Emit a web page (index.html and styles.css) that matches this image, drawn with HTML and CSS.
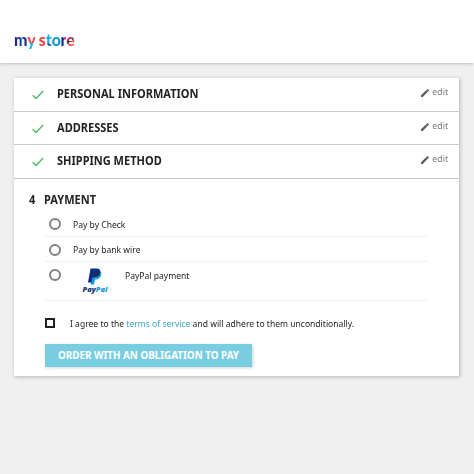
FILE: index.html
```html
<!DOCTYPE html>
<html lang="en">
<head>
<meta charset="utf-8">
<title>my store</title>
<link rel="stylesheet" href="styles.css">
</head>
<body>
<header class="header">
  <div class="logo"><span class="duo-m">m</span><span class="duo-y">y</span> <span class="red">s</span><span class="duo-t">t</span><span class="blue">o</span><span class="duo-r">r</span><span class="duo-e">e</span></div>
</header>
<main class="checkout">
  <section class="step">
    <svg class="check" viewBox="0 0 12 10"><path d="M.7 5.300 4 8.500 11.200 1"/></svg>
    <h2 class="title">PERSONAL INFORMATION</h2>
    <a class="edit"><svg class="pencil" viewBox="0 0 18 18"><path d="M0 14.200V18h3.800L14.800 7 11 3.200zM17.700 4.100a1 1 0 0 0 0-1.400L15.300.3a1 1 0 0 0-1.400 0L11.500 2.700l3.800 3.800z"/></svg><span class="edit-text">edit</span></a>
  </section>
  <section class="step">
    <svg class="check" viewBox="0 0 12 10"><path d="M.7 5.300 4 8.500 11.200 1"/></svg>
    <h2 class="title">ADDRESSES</h2>
    <a class="edit"><svg class="pencil" viewBox="0 0 18 18"><path d="M0 14.200V18h3.800L14.800 7 11 3.200zM17.700 4.100a1 1 0 0 0 0-1.400L15.300.3a1 1 0 0 0-1.400 0L11.500 2.700l3.800 3.800z"/></svg><span class="edit-text">edit</span></a>
  </section>
  <section class="step">
    <svg class="check" viewBox="0 0 12 10"><path d="M.7 5.300 4 8.500 11.200 1"/></svg>
    <h2 class="title">SHIPPING METHOD</h2>
    <a class="edit"><svg class="pencil" viewBox="0 0 18 18"><path d="M0 14.200V18h3.800L14.800 7 11 3.200zM17.700 4.100a1 1 0 0 0 0-1.400L15.300.3a1 1 0 0 0-1.400 0L11.500 2.700l3.800 3.800z"/></svg><span class="edit-text">edit</span></a>
  </section>
  <section class="payment">
    <div class="heading"><span class="title number">4</span><h2 class="title">PAYMENT</h2></div>
    <div class="options">
      <label class="option"><span class="radio"></span><span class="name">Pay by Check</span></label>
      <label class="option"><span class="radio"></span><span class="name">Pay by bank wire</span></label>
      <label class="option tall"><span class="radio"></span>
        <span class="paypal">
          <svg class="pp" viewBox="0 0 15 18">
            <path fill="#189bd7" d="M5 3.500h8.200c1.400 1.200 1.300 3.300.6 5-.9 2.500-2.900 3.600-5.500 3.600H7.500L6.500 17.500H2.800z"/>
            <path fill="#0b2f87" d="M2.700.4h6.500c3 0 4.400 1.600 3.800 4.400-.7 3.300-2.900 4.900-6.100 4.900H4.800L3.700 15.500H0z"/>
            <path fill="#1b2c63" d="M5.200 4h6.200c1 0 1.600.2 1.600.8-.7 3.300-2.900 4.900-6.100 4.900H4.200z"/>
          </svg>
          <span class="brand"><span class="pay">Pay</span><span class="pal">Pal</span></span>
        </span>
        <span class="name">PayPal payment</span></label>
    </div>
    <label class="terms"><span class="box"></span><span class="agree">I agree to the <a class="link">terms of service</a> and will adhere to them unconditionally.</span></label>
    <button class="order">ORDER WITH AN OBLIGATION TO PAY</button>
  </section>
</main>
</body>
</html>
```

FILE: styles.css
```css
* { box-sizing: border-box; }
body {
  margin: 0;
  height: 474px;
  overflow: hidden;
  background: #f0f0f0;
  color: #232323;
  font-family: "Noto Sans", sans-serif;
  font-size: 9.300px;
}
.header {
  height: 63px;
  padding: 30px 0 0 14px;
  background: #fff;
  box-shadow: 0 1px 3px rgba(0, 0, 0, .2);
}
.logo {
  font: 900 16px/20px Lato, sans-serif;
  letter-spacing: -.15px;
  white-space: nowrap;
}
.blue { color: #189bd7; }
.red { color: #ef4a50; }
.duo-m, .duo-y, .duo-t, .duo-r, .duo-e {
  background-clip: text;
  color: transparent;
}
.duo-m { background-image: linear-gradient(90deg, #262c86 55%, #189bd7 55% 72%, #262c86 72%); }
.duo-y { background-image: linear-gradient(180deg, #ef4a50 68%, #18b0dd 68%); }
.duo-t { background-image: linear-gradient(180deg, #18b0dd 70%, #2069b5 70%); }
.duo-r { background-image: linear-gradient(90deg, #262c86 55%, #df2860 55%); }
.duo-e { background-image: linear-gradient(145deg, #df2860 48%, #294351 48% 58%, #f15e4e 58%); }
.checkout {
  width: 445px;
  height: 298px;
  margin: 15px 0 0 14px;
  background: #fff;
  box-shadow: 1px 1px 4px rgba(0, 0, 0, .25);
}
.step {
  display: flex;
  height: 33.500px;
  padding: 0 10.500px 0 18px;
  border-bottom: 1px solid #c7c7c7;
}
.check {
  width: 12px;
  height: 10px;
  margin: 12px 13px 0 0;
  fill: none;
  stroke: #4cb860;
  stroke-width: 1.300;
}
.title {
  margin: 0;
  font-size: 11.700px;
  font-weight: 700;
  line-height: 16px;
  white-space: nowrap;
  transform: scaleX(.943);
  transform-origin: left;
}
.step .title { margin-top: 7px; }
.edit {
  display: flex;
  height: 14px;
  margin: 7px 0 0 auto;
  color: #7a7a7a;
  font-size: 9.500px;
  line-height: 14px;
}
.edit-text {
  transform: scaleX(.92);
  transform-origin: right;
}
.pencil {
  width: 8px;
  height: 8px;
  margin: 4px 2px 0 0;
  fill: #5c5c5c;
}
.payment { padding: 12.500px 31px 0; }
.heading { display: flex; margin-left: -16px; }
.number { width: 15px; }
.options { margin-top: 4px; }
.option {
  display: flex;
  height: 25.700px;
  border-bottom: 1px solid #f0f0f0;
}
.option.tall { height: 38.300px; }
.radio {
  width: 12px;
  height: 12px;
  margin: 7px 12px 0 4px;
  border: 2px solid #808080;
  border-radius: 50%;
}
.option .name {
  margin-top: 6.500px;
  line-height: 13px;
  white-space: nowrap;
  transform: scaleX(.92);
  transform-origin: left;
}
.paypal {
  display: flex;
  flex-direction: column;
  align-items: center;
  width: 28px;
  margin: 6px 16px 0 8px;
}
.pp { width: 14px; height: 17px; }
.brand {
  font: italic 800 7.500px/8px "Open Sans", sans-serif;
}
.pay { color: #203878; }
.pal { color: #189bd7; }
.terms {
  display: flex;
  height: 13px;
  margin-top: 16px;
  white-space: nowrap;
}
.box {
  width: 10px;
  height: 10px;
  margin: 1px 15px 0 0;
  border: 2px solid #222;
}
.agree {
  line-height: 13px;
  transform: scaleX(.92);
  transform-origin: left;
}
.link { color: #3aa4c4; }
.order {
  display: block;
  width: 207px;
  height: 23px;
  margin-top: 14px;
  padding: 0;
  border: 0;
  background: #78cee0;
  box-shadow: 1px 1px 3px rgba(0, 0, 0, .18);
  color: #fff;
  font: 700 9.850px/23px "Noto Sans", sans-serif;
  white-space: nowrap;
}
```
